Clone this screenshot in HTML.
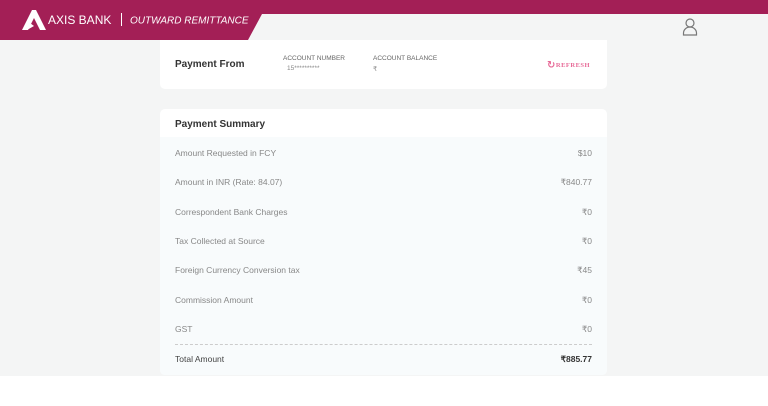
<!DOCTYPE html>
<html><head><meta charset="utf-8"><style>
*{margin:0;padding:0;box-sizing:border-box}
body{width:768px;height:406px;background:#fff;font-family:"Liberation Sans",sans-serif;position:relative;overflow:hidden}
.bg{position:absolute;left:0;top:0;width:768px;height:376px;background:#f4f5f5}
.card{position:absolute;left:160px;width:447px;background:#fff;border-radius:5px}
.lbl{position:absolute;font-size:6.5px;color:#666}
.row{position:absolute;left:15px;right:15px;font-size:8.5px;color:#888}
.row span{position:absolute;right:0}
</style></head><body>
<div class="bg"></div>
<svg style="position:absolute;left:0;top:0" width="768" height="42">
<polygon points="0,0 768,0 768,14 262,14 248,40 0,40" fill="#a31f56"/>
<polygon points="22,30 32,10 36,10 46,30 40,30 34,18 28,30" fill="#fff"/>
<polygon points="22,30 30,23 34,26 27,30" fill="#fff"/>
<text x="48" y="24" font-family="Liberation Sans" font-size="12" fill="#fff">AXIS BANK</text>
<rect x="121" y="13" width="1" height="13" fill="#fff"/>
<text x="130" y="23.5" font-family="Liberation Sans" font-size="10" font-style="italic" fill="#fff">OUTWARD REMITTANCE</text>
<g fill="none" stroke="#777" stroke-width="1.2"><circle cx="690" cy="23" r="4"/><path d="M683.5 35 v-2 a6.5 6 0 0 1 13 0 v2 z"/></g>
</svg>
<div class="card" style="top:40px;height:49px;border-radius:0 0 5px 5px">
<div style="position:absolute;left:15px;top:19px;font-size:10px;font-weight:bold;color:#333">Payment From</div>
<div class="lbl" style="left:123px;top:15px">ACCOUNT NUMBER</div>
<div class="lbl" style="left:127px;top:25px;color:#888">15**********</div>
<div class="lbl" style="left:213px;top:15px">ACCOUNT BALANCE</div>
<div class="lbl" style="left:213px;top:25px;color:#888">₹</div>
<div style="position:absolute;left:387px;top:19px;font-size:6.5px;color:#e76a97;font-family:'Liberation Serif',serif;font-weight:bold;letter-spacing:.5px"><span style="font-size:10px;font-family:'DejaVu Sans';position:relative;top:1px">↻</span>REFRESH</div>
</div>
<div class="card" style="top:109px;height:266px;overflow:hidden">
<div style="position:absolute;left:15px;top:10px;font-size:10px;font-weight:bold;color:#333">Payment Summary</div>
<div style="position:absolute;left:0;top:28px;width:100%;height:238px;background:#f8fbfc"></div>
<div class="row" style="top:39px">Amount Requested in FCY<span>$10</span></div>
<div class="row" style="top:68px">Amount in INR (Rate: 84.07)<span>₹840.77</span></div>
<div class="row" style="top:98px">Correspondent Bank Charges<span>₹0</span></div>
<div class="row" style="top:127px">Tax Collected at Source<span>₹0</span></div>
<div class="row" style="top:156px">Foreign Currency Conversion tax<span>₹45</span></div>
<div class="row" style="top:186px">Commission Amount<span>₹0</span></div>
<div class="row" style="top:215px">GST<span>₹0</span></div>
<div style="position:absolute;left:15px;right:15px;top:235px;border-top:1px dashed #ccc"></div>
<div class="row" style="top:245px;color:#444">Total Amount<span style="font-weight:bold;color:#333">₹885.77</span></div>
</div>
</body></html>
